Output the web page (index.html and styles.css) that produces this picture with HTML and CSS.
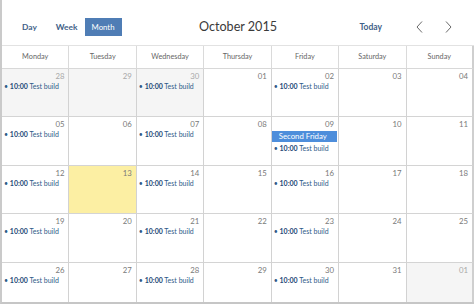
FILE: index.html
```html
<!DOCTYPE html>
<html lang="en">
<head>
<meta charset="utf-8">
<title>October 2015</title>
<link rel="stylesheet" href="styles.css">
</head>
<body>
<div class="page">
  <div class="toolbar">
    <div class="views">
      <span class="view">Day</span>
      <span class="view week">Week</span>
      <span class="view active">Month</span>
    </div>
    <div class="title">October 2015</div>
    <div class="nav">
      <span class="today">Today</span>
      <span class="arrow prev"><svg width="7" height="12" viewBox="0 0 7 12"><polyline points="6,0.5 1,6 6,11.5" fill="none" stroke="#6a6a6a" stroke-width="1"/></svg></span>
      <span class="arrow next"><svg width="7" height="12" viewBox="0 0 7 12"><polyline points="1,0.5 6,6 1,11.5" fill="none" stroke="#6a6a6a" stroke-width="1"/></svg></span>
    </div>
  </div>
  <div class="grid">
    <div class="dow">Monday</div>
    <div class="dow">Tuesday</div>
    <div class="dow">Wednesday</div>
    <div class="dow">Thursday</div>
    <div class="dow">Friday</div>
    <div class="dow">Saturday</div>
    <div class="dow last">Sunday</div>

    <div class="cell other"><div class="num">28</div><div class="ev">&bull; <b>10:00</b> Test build</div></div>
    <div class="cell other"><div class="num">29</div></div>
    <div class="cell other"><div class="num">30</div><div class="ev">&bull; <b>10:00</b> Test build</div></div>
    <div class="cell"><div class="num">01</div></div>
    <div class="cell"><div class="num">02</div><div class="ev">&bull; <b>10:00</b> Test build</div></div>
    <div class="cell"><div class="num">03</div></div>
    <div class="cell last"><div class="num">04</div></div>

    <div class="cell"><div class="num">05</div><div class="ev">&bull; <b>10:00</b> Test build</div></div>
    <div class="cell"><div class="num">06</div></div>
    <div class="cell"><div class="num">07</div><div class="ev">&bull; <b>10:00</b> Test build</div></div>
    <div class="cell"><div class="num">08</div></div>
    <div class="cell"><div class="num">09</div><div class="bar">Second Friday</div><div class="ev after">&bull; <b>10:00</b> Test build</div></div>
    <div class="cell"><div class="num">10</div></div>
    <div class="cell last"><div class="num">11</div></div>

    <div class="cell"><div class="num">12</div><div class="ev">&bull; <b>10:00</b> Test build</div></div>
    <div class="cell today-cell"><div class="num">13</div></div>
    <div class="cell"><div class="num">14</div><div class="ev">&bull; <b>10:00</b> Test build</div></div>
    <div class="cell"><div class="num">15</div></div>
    <div class="cell"><div class="num">16</div><div class="ev">&bull; <b>10:00</b> Test build</div></div>
    <div class="cell"><div class="num">17</div></div>
    <div class="cell last"><div class="num">18</div></div>

    <div class="cell"><div class="num">19</div><div class="ev">&bull; <b>10:00</b> Test build</div></div>
    <div class="cell"><div class="num">20</div></div>
    <div class="cell"><div class="num">21</div><div class="ev">&bull; <b>10:00</b> Test build</div></div>
    <div class="cell"><div class="num">22</div></div>
    <div class="cell"><div class="num">23</div><div class="ev">&bull; <b>10:00</b> Test build</div></div>
    <div class="cell"><div class="num">24</div></div>
    <div class="cell last"><div class="num">25</div></div>

    <div class="cell end"><div class="num">26</div><div class="ev">&bull; <b>10:00</b> Test build</div></div>
    <div class="cell end"><div class="num">27</div></div>
    <div class="cell end"><div class="num">28</div><div class="ev">&bull; <b>10:00</b> Test build</div></div>
    <div class="cell end"><div class="num">29</div></div>
    <div class="cell end"><div class="num">30</div><div class="ev">&bull; <b>10:00</b> Test build</div></div>
    <div class="cell end"><div class="num">31</div></div>
    <div class="cell end last other"><div class="num">01</div></div>
  </div>
</div>
</body>
</html>
```
FILE: styles.css
```css
* { box-sizing: border-box; }
html, body { margin: 0; padding: 0; background: #fff; }
body {
  font-family: Lato, "Liberation Sans", Arial, sans-serif;
  color: #333;
}
.page {
  width: 474px;
  height: 304px;
  border-left: 2px solid #cacaca;
  border-bottom: 2px solid #c6c6c6;
  display: flex;
  flex-direction: column;
  overflow: hidden;
}
.toolbar {
  height: 45px;
  flex: none;
  display: grid;
  grid-template-columns: 1fr auto 1fr;
  align-items: center;
  padding-top: 9px;
}
.views {
  display: flex;
  align-items: center;
  padding-left: 20px;
}
.view {
  font-size: 8.4px;
  font-weight: bold;
  color: #3f5f88;
  line-height: 18px;
}
.week { margin-left: 19px; }
.view.active {
  margin-left: 7px;
  background: #4f7db5;
  color: #fff;
  font-weight: normal;
  padding: 0 7px;
  height: 18px;
  font-size: 7.8px;
}
.title {
  font-size: 12.6px;
  color: #3a3a3a;
  line-height: 18px;
}
.nav {
  display: flex;
  align-items: center;
  justify-content: flex-end;
  padding-right: 22px;
}
.today {
  font-size: 8.5px;
  font-weight: bold;
  color: #3f5f88;
  margin-right: 34px;
}
.arrow { display: flex; }
.prev { margin-right: 22px; }
.grid {
  flex: 1;
  display: grid;
  grid-template-columns: repeat(7, 1fr);
  grid-template-rows: 23px 48px 49px 48px 49px 1fr;
  border-top: 1px solid #e2e2e2;
}
.dow {
  font-size: 7.3px;
  color: #666;
  text-align: center;
  line-height: 21px;
  border-right: 1px solid #dadada;
  border-bottom: 1px solid #d8d8d8;
}
.cell {
  border-right: 1px solid #d2d2d2;
  border-bottom: 1px solid #d4d4d4;
  overflow: hidden;
}
.cell.last, .dow.last { border-right: 2px solid #cfcfcf; }
.cell.end { border-bottom: 0; }
.cell.other { background: #f5f5f5; }
.today-cell { background: #fcefa3; }
.num {
  text-align: right;
  font-size: 7.8px;
  color: #7a7a7a;
  line-height: 10px;
  padding: 2px 4px 0 0;
}
.other .num { color: #a8a8a8; }
.ev {
  font-size: 7px;
  line-height: 11px;
  color: #2f5b88;
  padding-left: 2px;
  white-space: nowrap;
}
.ev b { color: #1f4a78; }
.ev.after { margin-top: 1px; }
.bar {
  margin: 2px 1px 0 0;
  height: 11px;
  background: #4e8edb;
  color: #fff;
  font-size: 7.8px;
  line-height: 11px;
  padding-left: 7px;
  white-space: nowrap;
}
```
